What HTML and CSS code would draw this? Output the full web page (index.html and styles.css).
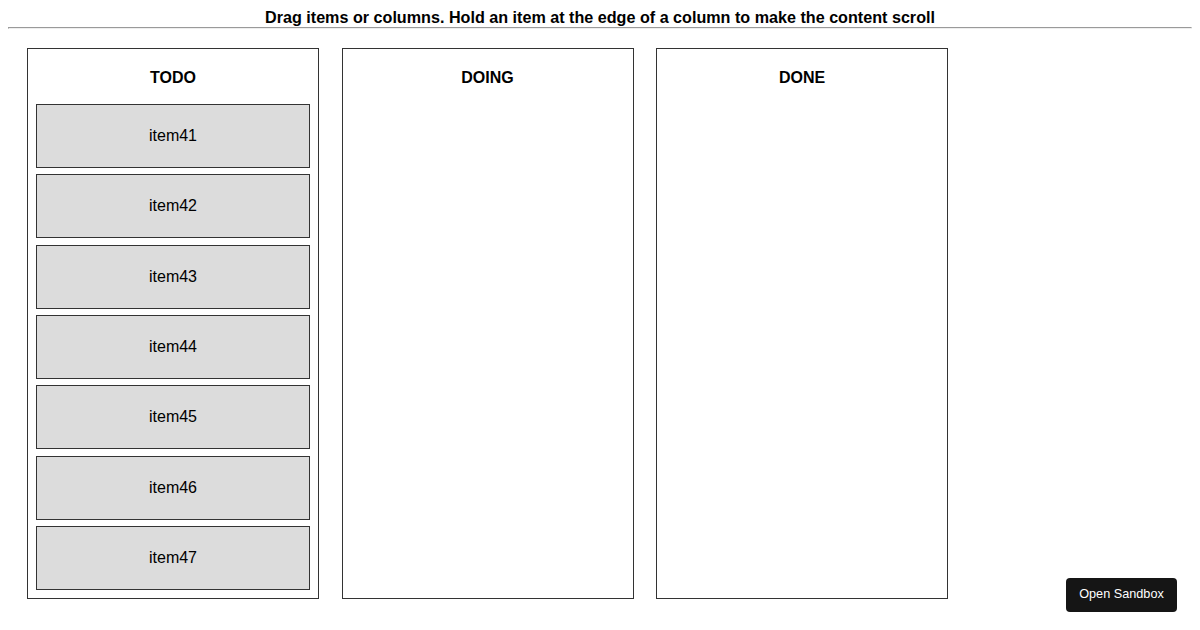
FILE: index.html
```html
<!DOCTYPE html>
<html lang="en">
<head>
  <meta charset="UTF-8" />
  <title>Board</title>
  <link rel="stylesheet" href="styles.css">
</head>
<body>
  <div class="hint">Drag items or columns. Hold an item at the edge of a column to make the content scroll</div>
  <hr class="rule">
  <section class="board">
    <div class="column">
      <div class="column-title">TODO</div>
      <div class="items">
        <div class="item">item41</div>
        <div class="item">item42</div>
        <div class="item">item43</div>
        <div class="item">item44</div>
        <div class="item">item45</div>
        <div class="item">item46</div>
        <div class="item">item47</div>
      </div>
    </div>
    <div class="column">
      <div class="column-title">DOING</div>
      <div class="items"></div>
    </div>
    <div class="column">
      <div class="column-title">DONE</div>
      <div class="items"></div>
    </div>
  </section>
  <a class="sandbox-btn" href="#">Open Sandbox</a>
</body>
</html>
```

FILE: styles.css
```css
* {
  box-sizing: border-box;
}

body {
  margin: 8px;
  font-family: 'Liberation Sans', Arial, sans-serif;
  font-size: 16px;
  color: #000;
  background: #fff;
}

.hint {
  text-align: center;
  font-weight: bold;
  font-size: 16.15px;
  line-height: 19px;
}

.rule {
  margin: 0;
}

.board {
  display: flex;
  gap: 22.5px;
  margin-top: 19px;
  padding-left: 19px;
}

.column {
  width: 292px;
  height: 551px;
  border: 1px solid #333;
  padding: 8px;
  display: flex;
  flex-direction: column;
}

.column-title {
  text-align: center;
  font-weight: bold;
  line-height: 42px;
  margin-bottom: 5px;
}

.items {
  flex: 1;
  overflow: hidden;
  display: flex;
  flex-direction: column;
  gap: 6.33px;
}

.item {
  flex: none;
  height: 64px;
  border: 1px solid #333;
  background: #dcdcdc;
  display: flex;
  align-items: center;
  justify-content: center;
}

.sandbox-btn {
  position: fixed;
  right: 23px;
  bottom: 18px;
  width: 111px;
  height: 34px;
  padding-bottom: 2px;
  background: #151515;
  color: #fff;
  border-radius: 4px;
  font-size: 12.7px;
  text-decoration: none;
  display: flex;
  align-items: center;
  justify-content: center;
}
```
